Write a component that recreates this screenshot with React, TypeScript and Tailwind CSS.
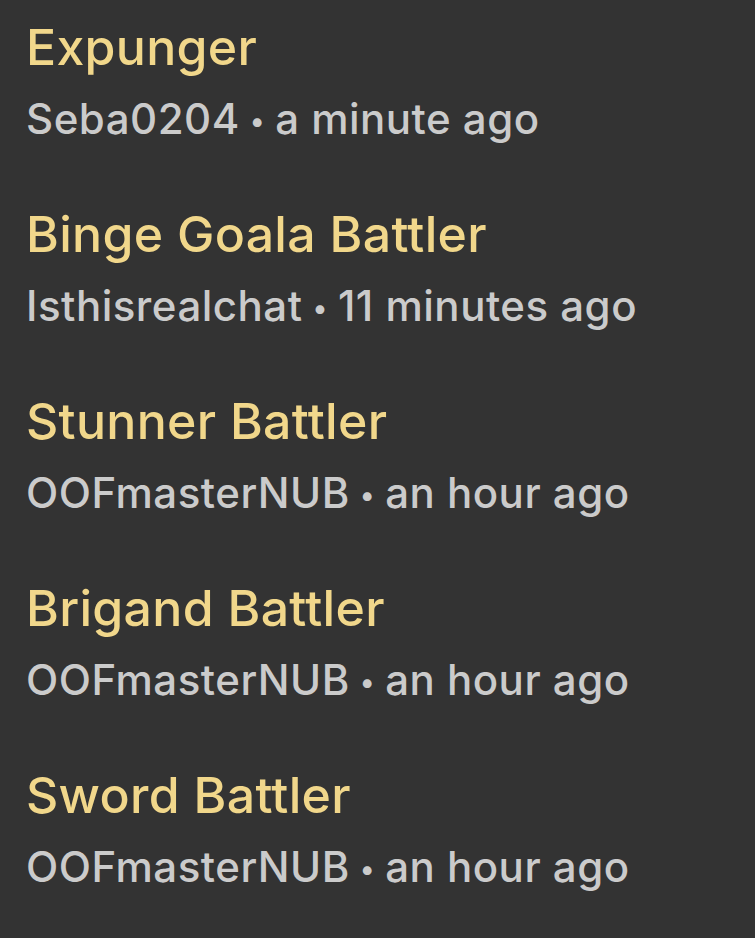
import React from "react";

const items = [
    { title: "Expunger", author: "Seba0204", time: "a minute ago" },
    { title: "Binge Goala Battler", author: "Isthisrealchat", time: "11 minutes ago" },
    { title: "Stunner Battler", author: "OOFmasterNUB", time: "an hour ago" },
    { title: "Brigand Battler", author: "OOFmasterNUB", time: "an hour ago" },
    { title: "Sword Battler", author: "OOFmasterNUB", time: "an hour ago" },
];

export default function App() {
    return (
        <div className="min-h-[938px] w-[755px] bg-[#333333] px-[26px] pt-[19px] font-['Inter',sans-serif]">
            <ul className="flex flex-col gap-[59px]">
                {items.map((item) => (
                    <li key={item.title} className="flex flex-col gap-[18px]">
                        <a className="text-[50px] leading-[56px] font-medium tracking-[0.3px] text-[#f1d78b]">
                            {item.title}
                        </a>
                        <div className="whitespace-nowrap text-[42px] leading-[52px] font-medium tracking-[0.5px] text-[#cbcbcb]">
                            {item.author}
                            <span className="mx-[10px] text-[28px] align-[3px]">•</span>
                            {item.time}
                        </div>
                    </li>
                ))}
            </ul>
        </div>
    );
}
